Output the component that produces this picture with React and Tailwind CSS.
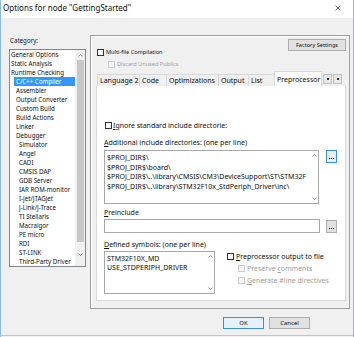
import React from "react";

const categories = [
  { label: "General Options", level: 0 },
  { label: "Static Analysis", level: 0 },
  { label: "Runtime Checking", level: 0 },
  { label: "C/C++ Compiler", level: 1, selected: true },
  { label: "Assembler", level: 1 },
  { label: "Output Converter", level: 1 },
  { label: "Custom Build", level: 1 },
  { label: "Build Actions", level: 1 },
  { label: "Linker", level: 1 },
  { label: "Debugger", level: 1 },
  { label: "Simulator", level: 2 },
  { label: "Angel", level: 2 },
  { label: "CADI", level: 2 },
  { label: "CMSIS DAP", level: 2 },
  { label: "GDB Server", level: 2 },
  { label: "IAR ROM-monitor", level: 2 },
  { label: "I-jet/JTAGjet", level: 2 },
  { label: "J-Link/J-Trace", level: 2 },
  { label: "TI Stellaris", level: 2 },
  { label: "Macraigor", level: 2 },
  { label: "PE micro", level: 2 },
  { label: "RDI", level: 2 },
  { label: "ST-LINK", level: 2 },
  { label: "Third-Party Driver", level: 2 },
];

const indents = ["pl-[1px]", "pl-[4px]", "pl-[7px]"];

const tabs = [
  { label: "Language 2", w: "w-[42px]" },
  { label: "Code", w: "w-[27px]" },
  { label: "Optimizations", w: "w-[52px]" },
  { label: "Output", w: "w-[30px]" },
  { label: "List", w: "w-[26px]" },
];

const includes = [
  "$PROJ_DIR$\\",
  "$PROJ_DIR$\\board\\",
  "$PROJ_DIR$\\..\\library\\CMSIS\\CM3\\DeviceSupport\\ST\\STM32F",
  "$PROJ_DIR$\\..\\library\\STM32F10x_StdPeriph_Driver\\inc\\",
];

const Check = ({ disabled }) => (
  <span
    className={
      disabled
        ? "block w-[7px] h-[7px] border border-[#cccccc] bg-[#f4f4f4] shrink-0"
        : "block w-[7px] h-[7px] border border-[#333333] bg-white shrink-0"
    }
  />
);

const Caret = ({ down }) => (
  <svg width="5" height="3" viewBox="0 0 5 3">
    <path
      d={down ? "M0.5 0.5 L2.5 2.5 L4.5 0.5" : "M0.5 2.5 L2.5 0.5 L4.5 2.5"}
      fill="none"
      stroke="#777"
      strokeWidth="0.8"
    />
  </svg>
);

const Dots = ({ focused }) => (
  <div
    className={
      focused
        ? "w-[11px] h-[13px] border border-[#3c8de0] bg-[#e5f1fb] flex items-end justify-center pb-[3px]"
        : "w-[11px] h-[13px] border border-[#adadad] bg-[#e1e1e1] flex items-end justify-center pb-[3px]"
    }
  >
    <span className="block w-[5px] h-[1px] border-t border-dotted border-[#222]" />
  </div>
);

const TextScroll = () => (
  <div className="w-[8px] flex flex-col justify-between items-center py-[3px]">
    <Caret />
    <Caret down />
  </div>
);

export default function App() {
  return (
    <div
      className="w-[354px] h-[337px] flex flex-col bg-[#f0f0f0] border-l border-r border-[#8db9e6] text-[#111] overflow-hidden"
      style={{ fontFamily: '"Noto Sans", "Open Sans", sans-serif' }}
    >
      {/* title bar */}
      <div className="h-[18px] bg-white flex items-center justify-between pl-[2px] pr-[12px] shrink-0">
        <span className="text-[8px] leading-[9px] mt-[-3px]">Options for node "GettingStarted"</span>
        <svg width="6" height="6" viewBox="0 0 6 6" className="mt-[-3px]">
          <path d="M0.5 0.5 L5.5 5.5 M5.5 0.5 L0.5 5.5" stroke="#444" strokeWidth="0.8" />
        </svg>
      </div>

      {/* body */}
      <div className="flex pl-[8px] text-[6.2px] leading-[9px]">
        {/* category column */}
        <div className="w-[77px] flex flex-col">
          <div className="mt-[18px] h-[9px] pl-[1px]">Category:</div>
          <div className="mt-[4px] h-[218px] border border-[#828790] bg-white flex">
            <div className="flex-1 flex flex-col">
              {categories.map((c) => (
                <div key={c.label} className={`h-[9px] whitespace-nowrap ${indents[c.level]}`}>
                  {c.selected ? (
                    <span className="block bg-[#3399ff] text-white pl-[2px]">{c.label}</span>
                  ) : (
                    <span className={c.level === 0 ? "block" : "block pl-[2px]"}>{c.label}</span>
                  )}
                </div>
              ))}
            </div>
            <div className="w-[10px] bg-[#f0f0f0] flex flex-col items-center">
              <div className="h-[10px] flex items-center">
                <Caret />
              </div>
              <div className="w-[7px] h-[182px] bg-[#c8c8c8]" />
              <div className="flex-1 flex items-center">
                <Caret down />
              </div>
            </div>
          </div>
        </div>

        {/* right options panel */}
        <div className="ml-[4px] mt-[17px] w-[260px] h-[274px] border border-[#a0a0a0] shadow-[inset_1px_1px_0_#ffffff] flex flex-col">
          <div className="flex justify-between items-start">
            <div className="mt-[12px] ml-[6px] flex flex-col">
              <div className="flex items-center gap-[2px] h-[9px]">
                <Check />
                <span className="text-[5.6px]">Multi-file Compilation</span>
              </div>
              <div className="flex items-center gap-[2px] h-[9px] mt-[3px] ml-[11px] text-[#a0a0a0]">
                <Check disabled />
                <span className="text-[5.6px]">Discard Unused Publics</span>
              </div>
            </div>
            <div className="mt-[3px] mr-[3px] w-[58px] h-[12px] border border-[#adadad] bg-[#e1e1e1] flex items-center justify-center text-[5.6px]">
              Factory Settings
            </div>
          </div>

          {/* tabs */}
          <div className="mt-[2px] ml-[6px] flex items-end h-[15px] text-[7px]">
            {tabs.map((t) => (
              <div
                key={t.label}
                className={`${t.w} h-[12px] pl-[2px] flex items-center border-t border-l border-[#d9d9d9] bg-[#f0f0f0] whitespace-nowrap overflow-hidden`}
              >
                {t.label}
              </div>
            ))}
            <div className="w-[48px] h-[15px] flex items-center pl-[2px] bg-white border-t border-l border-r border-[#d9d9d9] overflow-hidden whitespace-nowrap">
              Preprocessor
            </div>
            <div className="h-[11px] mb-[1px] ml-[1px] flex gap-[1px]">
              <div className="w-[9px] h-[10px] border border-[#c0c0c0] bg-[#e8e8e8] flex items-center justify-center">
                <span className="block w-[2px] h-[2px] bg-[#333]" />
              </div>
              <div className="w-[9px] h-[10px] border border-[#c0c0c0] bg-[#e8e8e8] flex items-center justify-center">
                <span className="block w-[2px] h-[2px] bg-[#333]" />
              </div>
            </div>
          </div>

          {/* tab content */}
          <div className="ml-[5px] mr-[3px] h-[215px] bg-white border border-[#d9d9d9] border-t-0 flex flex-col pl-[7px] text-[7px]">
            <div className="mt-[35px] ml-[1px] flex items-center gap-[1px] h-[9px]">
              <Check />
              <span>
                <span className="underline">I</span>gnore standard include directorie:
              </span>
            </div>

            <div className="mt-[8px] h-[9px]">
              <span className="underline">A</span>dditional include directories: (one per line)
            </div>
            <div className="mt-[3px] flex items-start">
              <div className="w-[215px] h-[54px] border border-[#a9a9a9] flex">
                <div className="flex-1 overflow-hidden pt-[2px] pl-[2px] whitespace-nowrap leading-[9.5px]">
                  {includes.map((l) => (
                    <div key={l}>{l}</div>
                  ))}
                </div>
                <TextScroll />
              </div>
              <div className="ml-[7px]">
                <Dots focused />
              </div>
            </div>

            <div className="mt-[4px] h-[9px]">
              <span className="underline">P</span>reinclude
            </div>
            <div className="mt-[2px] flex items-start">
              <div className="w-[216px] h-[14px] border border-[#a9a9a9]" />
              <div className="ml-[6px] mt-[1px]">
                <Dots />
              </div>
            </div>

            <div className="mt-[7px] h-[9px]">
              <span className="underline">D</span>efined symbols: (one per line)
            </div>
            <div className="mt-[2px] flex items-start">
              <div className="w-[111px] h-[43px] border border-[#a9a9a9] flex">
                <div className="flex-1 pt-[2px] pl-[2px] whitespace-nowrap">
                  <div>STM32F10X_MD</div>
                  <div>USE_STDPERIPH_DRIVER</div>
                </div>
                <TextScroll />
              </div>
              <div className="ml-[12px] flex flex-col">
                <div className="flex items-center gap-[2px] h-[9px] mt-[1px]">
                  <Check />
                  <span>
                    <span className="underline">P</span>reprocessor output to file
                  </span>
                </div>
                <div className="flex items-center gap-[2px] h-[9px] mt-[3px] ml-[11px] text-[#a0a0a0]">
                  <Check disabled />
                  <span>
                    Preserve <span className="underline">c</span>omments
                  </span>
                </div>
                <div className="flex items-center gap-[2px] h-[9px] mt-[3px] ml-[11px] text-[#a0a0a0]">
                  <Check disabled />
                  <span>
                    <span className="underline">G</span>enerate #line directives
                  </span>
                </div>
              </div>
            </div>
          </div>
        </div>
      </div>

      {/* dialog buttons */}
      <div className="mt-[8px] flex justify-end pr-[43px] gap-[5px] text-[6px]">
        <div className="w-[41px] h-[12px] border border-[#3c8de0] bg-[#e5f1fb] flex items-center justify-center">
          OK
        </div>
        <div className="w-[41px] h-[12px] border border-[#adadad] bg-[#e1e1e1] flex items-center justify-center">
          Cancel
        </div>
      </div>
      <div className="flex-1" />
      <div className="h-[2px] border-t border-[#c4c4c4]" />
    </div>
  );
}
